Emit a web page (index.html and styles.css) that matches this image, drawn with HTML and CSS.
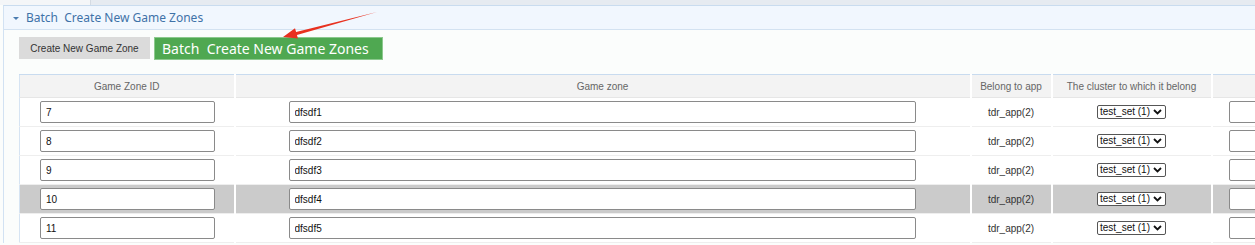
FILE: index.html
```html
<!DOCTYPE html>
<html>
<head>
<meta charset="utf-8">
<link rel="stylesheet" href="styles.css">
</head>
<body>
<div class="topstrip"><div class="tab"></div></div>
<div class="panel">
  <div class="panel-head"><span class="caret"></span><span class="title">Batch&nbsp; Create New Game Zones</span></div>
  <div class="panel-body">
    <div class="btns">
      <button class="btn-grey">Create New Game Zone</button>
      <button class="btn-green">Batch&nbsp; Create New Game Zones</button>
    </div>
    <table class="grid">
      <colgroup>
        <col class="c1"><col class="c2"><col class="c3"><col class="c4"><col class="c5">
      </colgroup>
      <thead>
        <tr><th>Game Zone ID</th><th>Game zone</th><th>Belong to app</th><th>The cluster to which it belong</th><th></th></tr>
      </thead>
      <tbody>
        <tr><td><input class="in-id" value="7"></td><td><input class="in-name" value="dfsdf1"></td><td>tdr_app(2)</td><td><span class="sel">test_set (1)<svg width="9" height="6" viewBox="0 0 9 6"><path d="M1 1l3.5 3.5L8 1" fill="none" stroke="#111" stroke-width="1.8"/></svg></span></td><td><input class="in-x"></td></tr>
        <tr><td><input class="in-id" value="8"></td><td><input class="in-name" value="dfsdf2"></td><td>tdr_app(2)</td><td><span class="sel">test_set (1)<svg width="9" height="6" viewBox="0 0 9 6"><path d="M1 1l3.5 3.5L8 1" fill="none" stroke="#111" stroke-width="1.8"/></svg></span></td><td><input class="in-x"></td></tr>
        <tr><td><input class="in-id" value="9"></td><td><input class="in-name" value="dfsdf3"></td><td>tdr_app(2)</td><td><span class="sel">test_set (1)<svg width="9" height="6" viewBox="0 0 9 6"><path d="M1 1l3.5 3.5L8 1" fill="none" stroke="#111" stroke-width="1.8"/></svg></span></td><td><input class="in-x"></td></tr>
        <tr class="hl"><td><input class="in-id" value="10"></td><td><input class="in-name" value="dfsdf4"></td><td>tdr_app(2)</td><td><span class="sel">test_set (1)<svg width="9" height="6" viewBox="0 0 9 6"><path d="M1 1l3.5 3.5L8 1" fill="none" stroke="#111" stroke-width="1.8"/></svg></span></td><td><input class="in-x"></td></tr>
        <tr><td><input class="in-id" value="11"></td><td><input class="in-name" value="dfsdf5"></td><td>tdr_app(2)</td><td><span class="sel">test_set (1)<svg width="9" height="6" viewBox="0 0 9 6"><path d="M1 1l3.5 3.5L8 1" fill="none" stroke="#111" stroke-width="1.8"/></svg></span></td><td><input class="in-x"></td></tr>
      </tbody>
    </table>
  </div>
</div>
<svg class="arrow" width="1255" height="245" viewBox="0 0 1255 245">
  <polygon points="283,37 295,28.3 296.1,31.9 377,12 296.9,34.9 298,38.5" fill="#e8311f"/>
</svg>
</body>
</html>
```

FILE: styles.css
```css
html, body {
  margin: 0;
  padding: 0;
  width: 1255px;
  height: 245px;
  overflow: hidden;
  background: #fbfdfc;
  font-family: "Liberation Sans", Arial, sans-serif;
  position: relative;
}
.topstrip {
  height: 5px;
  background: #e6ebf1;
  display: flex;
}
.tab {
  width: 90px;
  height: 5px;
  background: #f4f6f8;
  border-right: 1px solid #d4dbe3;
}
.panel {
  margin-left: 3px;
  border-left: 1px solid #d2e2f3;
  border-top: 1px solid #c9dcef;
}
.panel-head {
  height: 23px;
  background: #f1f7fe;
  border-bottom: 1px solid #d3e2f1;
  display: flex;
  align-items: center;
  padding-left: 9px;
}
.caret {
  width: 0;
  height: 0;
  border-left: 3px solid transparent;
  border-right: 3px solid transparent;
  border-top: 3px solid #4a7cb0;
  margin-right: 7px;
  margin-top: 1px;
}
.title {
  font-family: "Noto Sans", "Open Sans", sans-serif;
  font-size: 12px;
  color: #3f72a8;
  letter-spacing: 0;
}
.panel-body {
  padding: 7px 0 0 15px;
}
.btns {
  display: flex;
  align-items: flex-start;
  gap: 4px;
  height: 23px;
}
.btn-grey {
  height: 22px;
  width: 131px;
  border: none;
  background: #dbdbdb;
  color: #333;
  font-family: "Liberation Sans", Arial, sans-serif;
  font-size: 10px;
  padding: 0;
}
.btn-green {
  height: 23px;
  width: 229px;
  border: 1px solid #8cc98e;
  background: #4fa851;
  color: #fff;
  font-family: "Noto Sans", "Open Sans", sans-serif;
  font-size: 14px;
  letter-spacing: 0;
  padding: 0 0 0 4px;
  text-align: left;
  padding-left: 7px;
}
.grid {
  margin-top: 14px;
  border-collapse: collapse;
  width: 1500px;
  table-layout: fixed;
  border-top: 1px solid #c8dbef;
  border-left: 1px solid #d6e4f3;
}
.c1 { width: 215px; }
.c2 { width: 736px; }
.c3 { width: 81px; }
.c4 { width: 160px; }
.c5 { width: 308px; }
.grid th {
  height: 22px;
  background: #f3f3f3;
  color: #666;
  font-weight: normal;
  font-size: 10px;
  border-right: 2px solid #fff;
  border-bottom: 1px solid #e6e6e6;
  padding: 0;
}
.grid td {
  height: 28px;
  padding: 0;
  font-size: 10px;
  color: #333;
  text-align: center;
  border-right: 2px solid #fff;
  border-bottom: 1px solid #eeeeee;
  background: #fff;
}
.grid tr.hl td {
  background: #cbcbcb;
}
.grid input {
  box-sizing: border-box;
  height: 22px;
  border: 1px solid #8a8a8a;
  border-radius: 2px;
  background: #fff;
  font-family: "Liberation Sans", Arial, sans-serif;
  font-size: 10px;
  color: #111;
  padding: 0 0 0 5px;
  display: block;
}
.in-id { width: 175px; margin-left: 20px; }
.in-name { width: 627px; margin-left: 53px; }
.in-x { width: 120px; margin-left: 16px; }
.sel {
  display: inline-flex;
  align-items: center;
  gap: 3px;
  box-sizing: border-box;
  height: 14px;
  padding: 0 3px 0 2px;
  border: 1px solid #555;
  border-radius: 2px;
  background: #fff;
  color: #111;
  font-size: 10px;
  line-height: 12px;
  vertical-align: middle;
}
.arrow {
  position: absolute;
  left: 0;
  top: 0;
  pointer-events: none;
}
```
